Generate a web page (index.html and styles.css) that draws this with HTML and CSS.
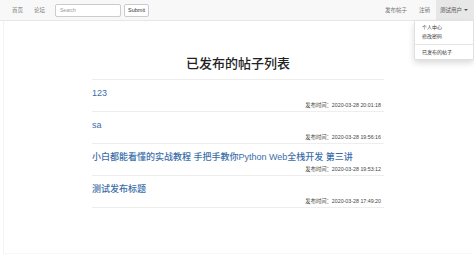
FILE: index.html
```html
<!DOCTYPE html>
<html lang="zh">
<head>
<meta charset="utf-8">
<title>已发布的帖子列表</title>
<link rel="stylesheet" href="styles.css">
</head>
<body>
<nav class="navbar">
  <div class="nav-left">
    <a class="nav-link" href="#">首页</a>
    <a class="nav-link" href="#">论坛</a>
    <form class="search">
      <input class="search-input" type="text" placeholder="Search">
      <button class="search-btn" type="button">Submit</button>
    </form>
  </div>
  <div class="nav-right">
    <a class="nav-link" href="#">发布帖子</a>
    <a class="nav-link" href="#">注销</a>
    <div class="dropdown">
      <a class="nav-link active" href="#">测试用户 <span class="caret"></span></a>
      <ul class="dropdown-menu">
        <li><a href="#">个人中心</a></li>
        <li><a href="#">修改密码</a></li>
        <li class="divider"></li>
        <li><a href="#">已发布的帖子</a></li>
      </ul>
    </div>
  </div>
</nav>
<main class="page">
  <div class="container">
    <h1 class="page-title">已发布的帖子列表</h1>
    <div class="post">
      <a class="post-title" href="#">123</a>
      <div class="post-time">发布时间：2020-03-28 20:01:18</div>
    </div>
    <div class="post">
      <a class="post-title" href="#">sa</a>
      <div class="post-time">发布时间：2020-03-28 19:56:16</div>
    </div>
    <div class="post">
      <a class="post-title" href="#">小白都能看懂的实战教程 手把手教你Python Web全栈开发 第三讲</a>
      <div class="post-time">发布时间：2020-03-28 19:53:12</div>
    </div>
    <div class="post">
      <a class="post-title" href="#">测试发布标题</a>
      <div class="post-time">发布时间：2020-03-28 17:49:20</div>
    </div>
  </div>
</main>
</body>
</html>
```
FILE: styles.css
```css
* { box-sizing: border-box; }
html, body { margin: 0; padding: 0; background: #fff; }
body {
  font-family: "Liberation Sans", "Noto Sans CJK SC", sans-serif;
  color: #333;
  width: 474px;
  height: 256px;
  overflow: hidden;
}
a { text-decoration: none; }

.navbar {
  height: 21px;
  background: #f8f8f8;
  border-bottom: 1px solid #e7e7e7;
  display: flex;
  justify-content: space-between;
  align-items: stretch;
  position: relative;
  z-index: 2;
}
.nav-left, .nav-right { display: flex; align-items: stretch; }
.nav-left { padding-left: 6px; }
.nav-link {
  display: flex;
  align-items: center;
  padding: 0 6px;
  font-size: 5.5px;
  color: #777;
}
.nav-left .nav-link { padding: 0 5px 0 6px; }
.search { display: flex; align-items: center; gap: 3px; margin-left: 5px; }
.search-input {
  width: 66px;
  height: 13px;
  margin: 0;
  padding: 0 4px;
  border: 1px solid #ccc;
  border-radius: 2px;
  font-size: 5px;
  font-family: "Liberation Sans", sans-serif;
  background: #fff;
}
.search-input::placeholder { color: #999; }
.search-btn {
  height: 13px;
  margin: 0;
  padding: 0 3px;
  border: 1px solid #ccc;
  border-radius: 2px;
  background: #fff;
  font-size: 5.5px;
  font-family: "Liberation Sans", sans-serif;
  color: #333;
}
.nav-right .nav-link { padding: 0 6px; }
.dropdown { position: relative; display: flex; }
.nav-right .nav-link.active {
  background: #e7e7e7;
  color: #555;
  padding: 0 6px 0 4px;
}
.caret {
  display: inline-block;
  width: 0; height: 0;
  margin-left: 2px;
  border-top: 2px solid #555;
  border-left: 2px solid transparent;
  border-right: 2px solid transparent;
}
.dropdown-menu {
  position: absolute;
  top: 21px;
  right: 0;
  width: 60px;
  margin: 0;
  padding: 2px 0;
  list-style: none;
  background: #fff;
  border: 1px solid rgba(0,0,0,0.12);
  border-top: none;
  border-radius: 0 0 2px 2px;
  box-shadow: 0 3px 6px rgba(0,0,0,0.15);
}
.dropdown-menu a {
  display: block;
  padding: 0 7px;
  line-height: 9px;
  font-size: 5px;
  color: #333;
}
.dropdown-menu .divider {
  height: 1px;
  margin: 3px 0;
  background: #e5e5e5;
}

.page {
  margin: 0 2px 0 3px;
  height: 233px;
  border-left: 1px solid #f3f3f3;
  border-bottom: 1px solid #f7f7f7;
}
.container {
  width: 292px;
  margin: 0 auto;
  padding-top: 32px;
}
.page-title {
  margin: 0;
  height: 27px;
  line-height: 20px;
  text-align: center;
  font-size: 13px;
  font-weight: 500;
  color: #222;
  font-family: "Noto Sans CJK SC", sans-serif;
  border-bottom: 1px solid #eee;
}
.post {
  padding: 7px 3px 2px 0;
  border-bottom: 1px solid #eee;
  display: flex;
  flex-direction: column;
  gap: 2px;
}
.post-title {
  display: block;
  line-height: 12px;
  height: 12px;
  font-size: 9px;
  font-weight: 500;
  color: #3a6ea8;
  white-space: nowrap;
}
.post-time {
  line-height: 8px;
  height: 8px;
  font-size: 5.3px;
  color: #444;
  text-align: right;
}
```
